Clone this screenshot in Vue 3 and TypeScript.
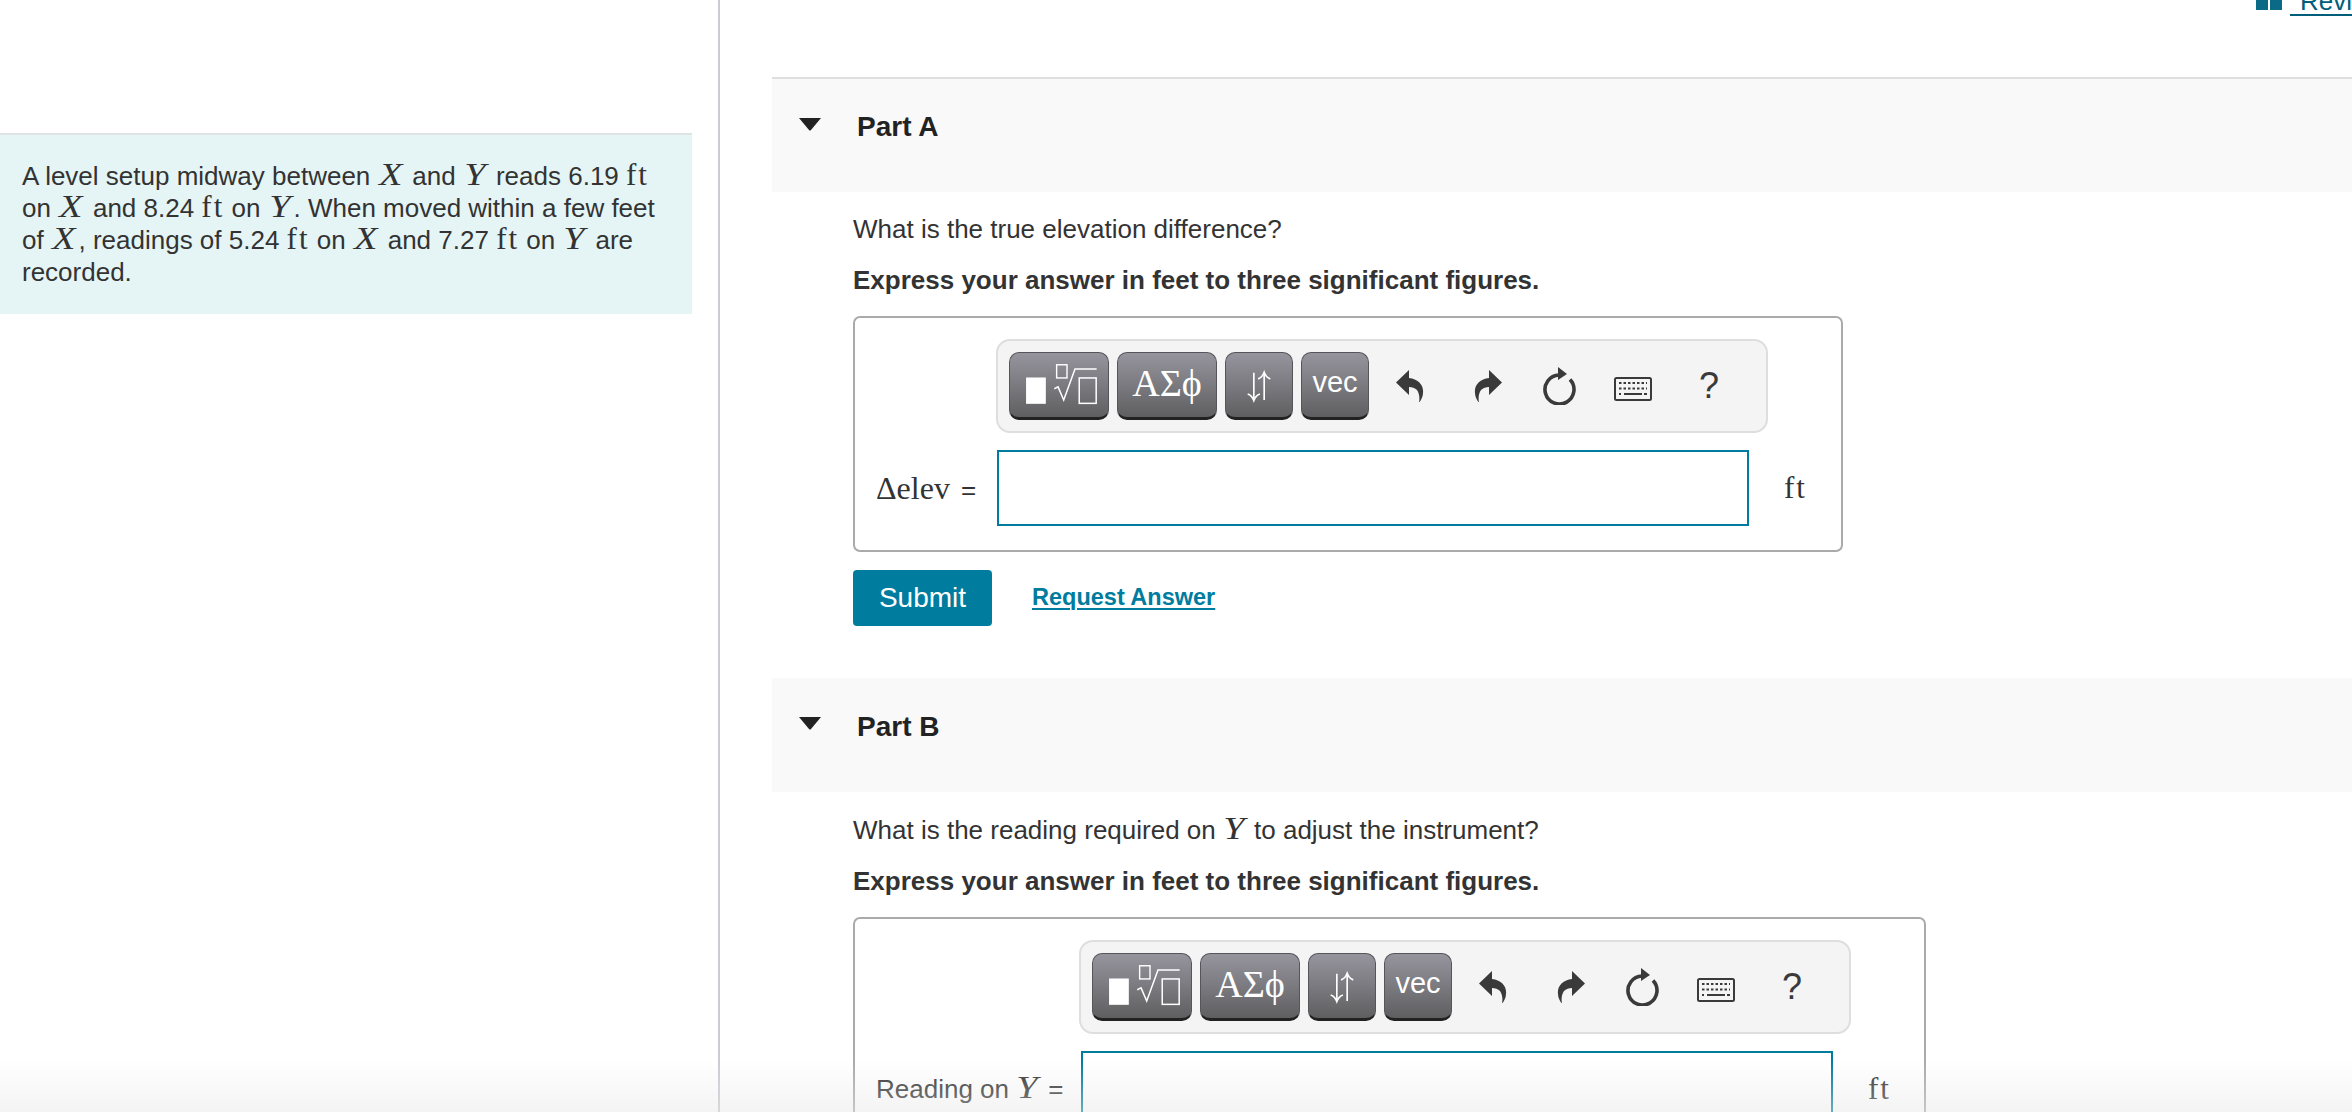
<script setup lang="ts">
interface Part {
  name: string
  kind: 'a' | 'b'
}
const parts: Part[] = [
  { name: 'Part A', kind: 'a' },
  { name: 'Part B', kind: 'b' },
]
</script>

<template>
  <div class="page">
    <aside class="left">
      <div class="intro">
        A level setup midway between <i class="m">X</i> and <i class="m">Y</i> reads 6.19 <span class="u">ft</span>
        on <i class="m">X</i> and 8.24 <span class="u">ft</span> on <i class="m">Y</i>. When moved within a few feet
        of <i class="m">X</i>, readings of 5.24 <span class="u">ft</span> on <i class="m">X</i> and 7.27 <span class="u">ft</span> on <i class="m">Y</i> are
        recorded.
      </div>
    </aside>
    <main class="right">
      <a class="review">
        <svg class="book" viewBox="0 0 26 12"><rect x="0" y="0" width="12" height="10" /><rect x="14" y="0" width="12" height="10" /></svg>
        <span class="review-text">Review</span>
      </a>
      <section v-for="p in parts" :key="p.name" class="part" :class="p.kind">
        <header class="part-head">
          <svg class="caret" viewBox="0 0 22 13"><path d="M0 0H22L12 12Q11 13 10 12Z" /></svg>
          <h2>{{ p.name }}</h2>
        </header>
        <div class="part-body">
          <p class="q" v-if="p.kind === 'a'">What is the true elevation difference?</p>
          <p class="q" v-else>What is the reading required on <i class="m">Y</i> to adjust the instrument?</p>
          <p class="hint">Express your answer in feet to three significant figures.</p>
          <div class="answer">
            <div class="toolbar">
              <button class="tb w100">
                <svg viewBox="0 0 100 68" class="ico-t">
                  <rect x="15" y="26" width="21" height="28" fill="#fff" />
                  <rect x="47.500" y="12.500" width="11" height="14" fill="none" stroke="#fff" stroke-width="1.500" />
                  <path d="M45 38l4-2 6 14 12-33h23" fill="none" stroke="#fff" stroke-width="1.600" />
                  <rect x="71.500" y="26.500" width="18" height="27" fill="none" stroke="#fff" stroke-width="1.600" />
                </svg>
              </button>
              <button class="tb w100 greek">ΑΣϕ</button>
              <button class="tb w68">
                <svg viewBox="0 0 68 68" class="ico-t">
                  <path d="M28.500 21V50" fill="none" stroke="#fff" stroke-width="1.800" />
                  <path d="M22 43.500Q26.500 45 28.500 50.500Q30.500 45 35 43.500" fill="none" stroke="#fff" stroke-width="1.800" />
                  <path d="M39.500 50V21" fill="none" stroke="#fff" stroke-width="1.800" />
                  <path d="M33 27.500Q37.500 26 39.500 20.500Q41.500 26 46 27.500" fill="none" stroke="#fff" stroke-width="1.800" />
                </svg>
              </button>
              <button class="tb w68 vec">vec</button>
              <span class="cell c1">
                <svg width="28" height="32" viewBox="0 0 28 32"><path d="M13 0V8C22 9 28 15 27 23C27 27 25 30 23 33C24 27 23 23 21 20C19 18 16 17 13 17V25L0 12.500Z" fill="#3a3a3a" /></svg>
              </span>
              <span class="cell c2">
                <svg width="28" height="32" viewBox="0 0 28 32"><path d="M15 0V8C6 9 0 15 1 23C1 27 3 30 5 33C4 27 5 23 7 20C9 18 12 17 15 17V25L28 12.500Z" fill="#3a3a3a" /></svg>
              </span>
              <span class="cell c3">
                <svg width="34" height="38" viewBox="0 0 34 38"><path d="M17 8A14.500 14.500 0 1 0 28 12.500" fill="none" stroke="#3a3a3a" stroke-width="3.600" /><path d="M16 0L25 7L16 13Z" fill="#3a3a3a" /></svg>
              </span>
              <span class="cell c4">
                <svg width="38" height="24" viewBox="0 0 38 24">
                  <rect x="1" y="1" width="36" height="22" rx="1.500" fill="none" stroke="#3a3a3a" stroke-width="2" />
                  <path d="M5 6H33M5 11.500H33" stroke="#3a3a3a" stroke-width="2" stroke-dasharray="2.500 2" fill="none" />
                  <path d="M5 17H7M10 17H28M30 17H33" stroke="#3a3a3a" stroke-width="2" fill="none" />
                </svg>
              </span>
              <span class="cell c5 help">?</span>
            </div>
            <div class="row">
              <label class="lbl" v-if="p.kind === 'a'"><span class="sym">Δelev</span> =</label>
              <label class="lbl" v-else>Reading on <i class="m">Y</i> =</label>
              <div class="field"></div>
              <span class="unit">ft</span>
            </div>
          </div>
          <div class="actions" v-if="p.kind === 'a'">
            <button class="submit">Submit</button>
            <a class="req">Request Answer</a>
          </div>
        </div>
      </section>
    </main>
    <div class="fade"></div>
  </div>
</template>

<style>
html, body { margin: 0; padding: 0; background: #fff; overflow: hidden; }
</style>

<style scoped>
.page {
  position: relative;
  display: flex;
  width: 2352px;
  height: 1112px;
  overflow: hidden;
  font-family: "Liberation Sans", Arial, sans-serif;
  font-size: 26px;
  color: #333;
  background: #fff;
}
.left {
  box-sizing: border-box;
  flex: 0 0 720px;
  width: 720px;
  padding: 133px 26px 0 0;
  border-right: 2px solid #c9cdd2;
}
.intro {
  box-sizing: border-box;
  height: 181px;
  padding: 25px 22px 0 22px;
  border-top: 2px solid #dfe3e5;
  background: #e5f5f6;
  line-height: 32px;
}
.m {
  display: inline-block;
  font-family: "Liberation Serif", "DejaVu Serif", serif;
  font-style: italic;
  font-size: 32px;
  line-height: 0;
  margin: 0 5px 0 3px;
  transform: scaleX(1.2);
}
.q .m { margin: 0 4px 0 2px; }
.lbl .m { margin: 0 5px 0 2px; }
.u {
  font-family: "Liberation Serif", "DejaVu Serif", serif;
  font-size: 31px;
  letter-spacing: 2px;
  line-height: 0;
}
.right {
  position: relative;
  flex: 1;
  min-width: 0;
  padding: 77px 0 0 52px;
}
.review {
  position: absolute;
  top: -22px;
  left: 1536px;
  display: flex;
  align-items: flex-start;
  color: #005e7a;
}
.book {
  width: 26px;
  height: 12px;
  margin-top: 22px;
  fill: #0b6a85;
}
.review-text {
  margin-left: 8px;
  padding: 10px 0 0 10px;
  font-size: 26px;
  line-height: 26px;
  height: 26px;
  border-bottom: 2px solid #005e7a;
  white-space: nowrap;
}
.part-head {
  box-sizing: border-box;
  display: flex;
  align-items: flex-start;
  height: 114px;
  padding: 33px 0 0 27px;
  background: #f9f9f9;
}
.a .part-head {
  height: 115px;
  padding-top: 32px;
  border-top: 2px solid #dedede;
}
.caret {
  width: 22px;
  height: 13px;
  margin-top: 6px;
  fill: #222;
}
.a .caret { margin-top: 7px; }
.part-head h2 {
  margin: 0 0 0 36px;
  font-size: 28px;
  line-height: 32px;
  font-weight: 700;
  color: #222;
}
.part-body { padding: 0 0 0 81px; }
.q {
  margin: 0;
  padding-top: 21px;
  line-height: 34px;
}
.a .q { padding-top: 20px; }
.hint {
  margin: 16px 0 0;
  line-height: 36px;
  font-weight: 700;
}
.answer {
  box-sizing: border-box;
  margin-top: 18px;
  padding: 21px 0 0 0;
  border: 2px solid #aaa;
  border-radius: 7px;
  background: #fff;
}
.a .answer { width: 990px; height: 236px; }
.b .answer { width: 1073px; height: 300px; }
.toolbar {
  box-sizing: border-box;
  display: flex;
  align-items: center;
  width: 772px;
  height: 94px;
  padding-left: 11px;
  gap: 8px;
  border: 2px solid #dedede;
  border-radius: 14px;
  background: #f4f4f4;
}
.a .toolbar { margin-left: 141px; }
.b .toolbar { margin-left: 224px; }
.tb {
  box-sizing: border-box;
  height: 68px;
  padding: 0;
  border: 1px solid #55555a;
  border-bottom: 3px solid #222;
  border-radius: 10px;
  background: linear-gradient(#96959e, #5f5f61);
  color: #fff;
  flex: none;
}
.w100 { width: 100px; }
.w68 { width: 68px; }
.ico-t { display: block; width: 100%; height: 100%; margin-top: -1px; }
.greek { font-family: "Liberation Serif", serif; font-size: 38px; padding-bottom: 4px; }
.vec { font-family: "Liberation Sans", sans-serif; font-size: 29px; padding-bottom: 5px; }
.cell {
  display: flex;
  align-items: center;
  justify-content: center;
  flex: none;
  height: 68px;
}
.c1 { width: 76px; margin-left: -5px; }
.c2 { width: 80px; margin-left: -8px; }
.c3 { width: 64px; margin-left: -9px; }
.c4 { width: 84px; margin-left: -8px; padding-top: 6px; }
.c5 { width: 64px; margin-left: -8px; }
.help { font-size: 36px; color: #3a3a3a; margin-left: -6px; }
.row {
  display: flex;
  align-items: center;
  margin-top: 17px;
  height: 76px;
  padding-left: 21px;
}
.lbl {
  white-space: nowrap;
}
.a .lbl { width: 121px; flex: none; }
.b .lbl { width: 205px; flex: none; }
.sym { font-family: "Liberation Serif", serif; font-size: 32px; margin-right: 4px; }
.field {
  box-sizing: border-box;
  width: 752px;
  height: 76px;
  flex: none;
  border: 2px solid #007c9e;
  background: #fff;
}
.unit {
  margin-left: 35px;
  font-family: "Liberation Serif", serif;
  font-size: 31px;
  letter-spacing: 2px;
}
.actions {
  display: flex;
  align-items: flex-start;
  gap: 40px;
  margin-top: 18px;
  height: 58px;
  padding-bottom: 50px;
}
.submit {
  width: 139px;
  height: 56px;
  padding: 0;
  border: 0;
  border-radius: 4px;
  background: #007c9e;
  color: #fff;
  font-family: "Liberation Sans", sans-serif;
  font-size: 28px;
}
.req {
  margin-top: 14px;
  color: #007c9e;
  font-size: 23.500px;
  font-weight: 700;
  text-decoration: underline;
  text-decoration-thickness: 2px;
  text-underline-offset: 3px;
}
.fade {
  position: absolute;
  left: 0;
  right: 0;
  bottom: 0;
  height: 52px;
  pointer-events: none;
  background: linear-gradient(rgba(230, 230, 230, 0), rgba(230, 230, 230, 0.45));
}
</style>
